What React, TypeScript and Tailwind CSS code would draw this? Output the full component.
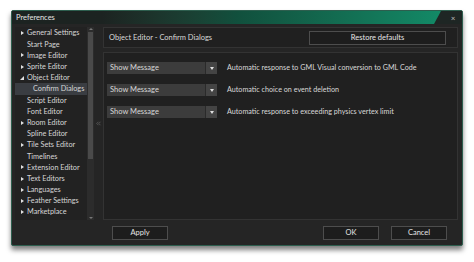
import { ChevronsLeft } from "lucide-react"

const font = { fontFamily: 'Lato, "Noto Sans", sans-serif' }

type Item = { label: string; arrow?: "closed" | "open"; indent?: boolean; active?: boolean }

const items: Item[] = [
  { label: "General Settings", arrow: "closed" },
  { label: "Start Page" },
  { label: "Image Editor", arrow: "closed" },
  { label: "Sprite Editor", arrow: "closed" },
  { label: "Object Editor", arrow: "open" },
  { label: "Confirm Dialogs", indent: true, active: true },
  { label: "Script Editor" },
  { label: "Font Editor" },
  { label: "Room Editor", arrow: "closed" },
  { label: "Spline Editor" },
  { label: "Tile Sets Editor", arrow: "closed" },
  { label: "Timelines" },
  { label: "Extension Editor", arrow: "closed" },
  { label: "Text Editors", arrow: "closed" },
  { label: "Languages", arrow: "closed" },
  { label: "Feather Settings", arrow: "closed" },
  { label: "Marketplace", arrow: "closed" },
]

const rows = [
  "Automatic response to GML Visual conversion to GML Code",
  "Automatic choice on event deletion",
  "Automatic response to exceeding physics vertex limit",
]

function Dropdown() {
  return (
    <div className="flex h-[12px] w-[110px] bg-[#3c3c3c]">
      <div className="flex-1 whitespace-nowrap pl-[3px] text-[7.5px] leading-[12px] text-[#d8d8d8]">Show Message</div>
      <div className="flex w-[12px] items-center justify-center border-l border-[#2a2a2a] bg-[#444]">
        <div className="h-0 w-0 border-x-[2.5px] border-t-[3px] border-x-transparent border-t-[#e0e0e0]" />
      </div>
    </div>
  )
}

function Btn({ label, w }: { label: string; w: string }) {
  return (
    <div className={`${w} h-[14px] whitespace-nowrap border border-[#4d4d4d] bg-[#1d1d1d] text-center text-[7.5px] leading-[12px] text-[#e6e6e6]`}>
      {label}
    </div>
  )
}

export default function App() {
  return (
    <div className="h-[262px] w-[474px] bg-white pl-[11px] pt-[10px]" style={font}>
      <div className="flex h-[236px] w-[452px] flex-col rounded-[2px] border border-[#2d5e4e] bg-[#252525] shadow-[0_4px_5px_rgba(0,0,0,0.5)]">
        {/* Title bar */}
        <div className="relative flex h-[13px] items-center bg-gradient-to-r from-[#1c2321] from-20% via-[#11503d] to-[#12906b] pl-[4px]">
          <span className="text-[7.5px] text-[#e4e4e4]">Preferences</span>
          <div className="absolute right-0 top-0 flex h-[13px] w-[28px] items-center justify-center bg-[#1e2624] [clip-path:polygon(7px_0,100%_0,100%_100%,0_100%)]">
            <span className="pl-[10px] text-[8px] leading-none text-[#bfbfbf]">×</span>
          </div>
        </div>

        {/* Body */}
        <div className="flex h-[196px] pt-[3px]">
          {/* Tree */}
          <div className="ml-[3px] flex w-[79px] bg-[#222]">
            <div className="flex-1 pt-[0.5px]">
              {items.map((it) => (
                <div
                  key={it.label}
                  className={`flex h-[11.2px] items-center ${it.active ? "bg-[#3a3d42]" : ""}`}
                >
                  <div className="flex w-[12px] justify-center pl-[2px]">
                    {it.arrow === "closed" && (
                      <div className="h-0 w-0 border-y-[2.5px] border-l-[3px] border-y-transparent border-l-[#e0e0e0]" />
                    )}
                    {it.arrow === "open" && (
                      <div className="h-0 w-0 border-b-[4px] border-l-[4px] border-b-[#e0e0e0] border-l-transparent" />
                    )}
                  </div>
                  <span className={`whitespace-nowrap text-[7.3px] leading-none text-[#d6d6d6] ${it.indent ? "pl-[6px]" : ""}`}>
                    {it.label}
                  </span>
                </div>
              ))}
            </div>
            <div className="flex w-[7px] flex-col items-center bg-[#2c2c2c] py-[1px]">
              <div className="h-0 w-0 border-x-[2px] border-b-[2px] border-x-transparent border-b-[#777]" />
              <div className="mt-[2px] h-[127px] w-[5px] bg-[#4a4a4a]" />
              <div className="flex-1" />
              <div className="h-0 w-0 border-x-[2px] border-t-[2px] border-x-transparent border-t-[#777]" />
            </div>
          </div>

          {/* Splitter */}
          <div className="flex w-[9px] items-center justify-center">
            <ChevronsLeft className="h-[7px] w-[7px] text-[#8a8a8a]" strokeWidth={1.5} />
          </div>

          {/* Right side */}
          <div className="mr-[4px] flex flex-1 flex-col gap-[4px]">
            <div className="flex h-[21px] items-center justify-between border border-[#333] bg-[#202020] pl-[5px] pr-[11px]">
              <span className="whitespace-nowrap text-[7.5px] text-[#d8d8d8]">Object Editor - Confirm Dialogs</span>
              <Btn label="Restore defaults" w="w-[137px]" />
            </div>
            <div className="flex flex-1 flex-col gap-[10px] border border-[#333] bg-[#202020] pl-[3px] pt-[9px]">
              {rows.map((r) => (
                <div key={r} className="flex items-center gap-[10px]">
                  <Dropdown />
                  <span className="whitespace-nowrap text-[7.2px] text-[#d8d8d8]">{r}</span>
                </div>
              ))}
            </div>
          </div>
        </div>

        {/* Footer */}
        <div className="flex flex-1 items-center pl-[100px] pr-[15px]">
          <Btn label="Apply" w="w-[56px]" />
          <div className="flex-1" />
          <div className="flex gap-[12px]">
            <Btn label="OK" w="w-[56px]" />
            <Btn label="Cancel" w="w-[56px]" />
          </div>
        </div>
      </div>
    </div>
  )
}
